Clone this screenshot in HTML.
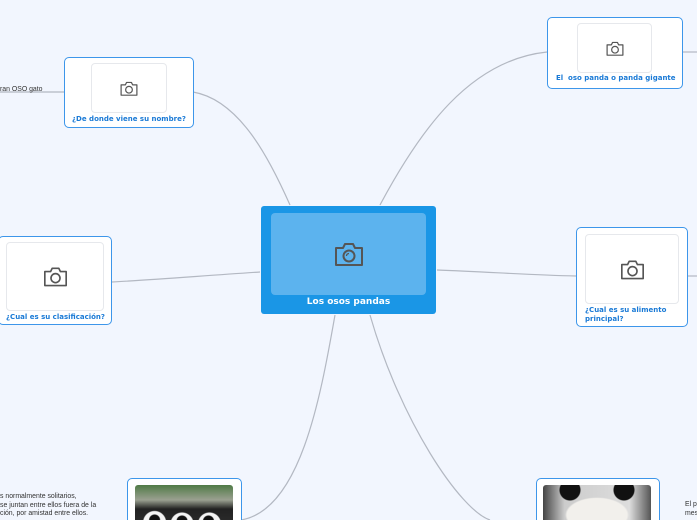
<!DOCTYPE html>
<html><head><meta charset="utf-8"><style>
html,body{margin:0;padding:0;width:697px;height:520px;overflow:hidden}
body{background:#f2f6fe;position:relative;font-family:"DejaVu Sans","Liberation Sans",sans-serif}
.n{position:absolute;background:#fff;border:1px solid #3d96ea;border-radius:5px;box-sizing:border-box}
.im{position:absolute;background:#fff;border:1px solid #e6e8ec;border-radius:4px;box-sizing:border-box;display:flex;align-items:center;justify-content:center}
.t{position:absolute;color:#1a7ad6;font-weight:bold;font-size:7px;line-height:9px;white-space:nowrap}
.s{position:absolute;font-size:6.9px;color:#333;line-height:8.5px;white-space:nowrap;font-family:"Liberation Sans",sans-serif}
svg.c{display:block}
</style></head><body>
<svg width="697" height="520" style="position:absolute;left:0;top:0" fill="none" stroke="#b3b8c2" stroke-width="1.2">
<path d="M290 205 C270 160 240 100 193 92"/>
<path d="M380 205 C420 130 470 60 547 52"/>
<path d="M260 272 C200 276 150 280 112 282"/>
<path d="M437 270 C490 272 530 275 576 276"/>
<path d="M335 315 C320 400 300 510 241 520"/>
<path d="M370 315 C400 420 460 510 490 520"/>
<path d="M0 92 L64 92"/>
<path d="M682 52 L697 52"/>
<path d="M687 276 L697 276"/>
</svg>

<div class="n" style="left:261px;top:206px;width:175px;height:108px;background:#1a96e6;border:none;border-radius:3px">
 <div style="position:absolute;left:10px;top:7px;width:155px;height:82px;background:#5cb3ee;border-radius:4px;display:flex;align-items:center;justify-content:center">
  <svg class="c" width="32" height="28" viewBox="0 0 32 28" fill="none" stroke="#555" stroke-width="2"><path d="M3 8 H10 L12 4 H20 L22 8 H29 V25 H3 Z" stroke-linejoin="round"/><circle cx="16" cy="16" r="5.5"/><path d="M13.5 16 A2.5 2.5 0 0 1 16 13.5" stroke-width="1.3"/></svg>
 </div>
 <div style="position:absolute;left:0;right:0;top:91px;text-align:center;color:#fff;font-weight:bold;font-size:9px">Los osos pandas</div>
</div>

<div class="n" style="left:64px;top:57px;width:130px;height:71px">
 <div class="im" style="left:26px;top:5px;width:76px;height:50px"><svg class="c" width="20" height="17" viewBox="0 0 32 28" fill="none" stroke="#555" stroke-width="2"><path d="M3 8 H10 L12 4 H20 L22 8 H29 V25 H3 Z" stroke-linejoin="round"/><circle cx="16" cy="16" r="5.5"/></svg></div>
 <div class="t" style="left:7px;top:57px">¿De donde viene su nombre?</div>
</div>

<div class="n" style="left:547px;top:17px;width:136px;height:72px">
 <div class="im" style="left:29px;top:5px;width:75px;height:50px"><svg class="c" width="20" height="17" viewBox="0 0 32 28" fill="none" stroke="#555" stroke-width="2"><path d="M3 8 H10 L12 4 H20 L22 8 H29 V25 H3 Z" stroke-linejoin="round"/><circle cx="16" cy="16" r="5.5"/></svg></div>
 <div class="t" style="left:8px;top:56px">El &nbsp;oso panda o panda gigante</div>
</div>

<div class="n" style="left:-2px;top:236px;width:114px;height:89px">
 <div class="im" style="left:7px;top:5px;width:98px;height:69px"><svg class="c" width="27" height="23" viewBox="0 0 32 28" fill="none" stroke="#555" stroke-width="2"><path d="M3 8 H10 L12 4 H20 L22 8 H29 V25 H3 Z" stroke-linejoin="round"/><circle cx="16" cy="16" r="5.5"/></svg></div>
 <div class="t" style="left:7px;top:76px">¿Cual es su clasificación?</div>
</div>

<div class="n" style="left:576px;top:227px;width:112px;height:100px">
 <div class="im" style="left:8px;top:6px;width:94px;height:70px"><svg class="c" width="27" height="23" viewBox="0 0 32 28" fill="none" stroke="#555" stroke-width="2"><path d="M3 8 H10 L12 4 H20 L22 8 H29 V25 H3 Z" stroke-linejoin="round"/><circle cx="16" cy="16" r="5.5"/></svg></div>
 <div class="t" style="left:8px;top:78px">¿Cual es su alimento<br>principal?</div>
</div>

<div class="n" style="left:127px;top:478px;width:115px;height:60px">
 <div style="position:absolute;left:7px;top:6px;width:98px;height:50px;border-radius:3px;background:radial-gradient(circle at 20% 70%,#111 0 5px,transparent 6px),radial-gradient(circle at 48% 72%,#111 0 5px,transparent 6px),radial-gradient(circle at 75% 72%,#111 0 5px,transparent 6px),radial-gradient(circle at 20% 75%,#f4f4f4 0 11px,transparent 12px),radial-gradient(circle at 48% 78%,#f4f4f4 0 11px,transparent 12px),radial-gradient(circle at 76% 78%,#f4f4f4 0 11px,transparent 12px),linear-gradient(#4f7a45 0,#9aa090 30%,#222 48%,#333 100%)"></div>
</div>

<div class="n" style="left:536px;top:478px;width:124px;height:60px">
 <div style="position:absolute;left:6px;top:6px;width:108px;height:50px;border-radius:3px;background:radial-gradient(ellipse at 50% 60%,#f2f0ec 0 30px,transparent 32px),radial-gradient(circle at 25% 10%,#111 0 10px,transparent 11px),radial-gradient(circle at 75% 10%,#111 0 10px,transparent 11px),linear-gradient(90deg,#444,#ccc 20%,#ddd 80%,#555)"></div>
</div>

<div class="s" style="left:0;top:86px">ran OSO gato</div>
<div class="s" style="left:0;top:493px">s normalmente solitarios,<br>se juntan entre ellos fuera de la<br>ción, por amistad entre ellos.</div>
<div class="s" style="left:685px;top:501px">El p<br>mes</div>
</body></html>
